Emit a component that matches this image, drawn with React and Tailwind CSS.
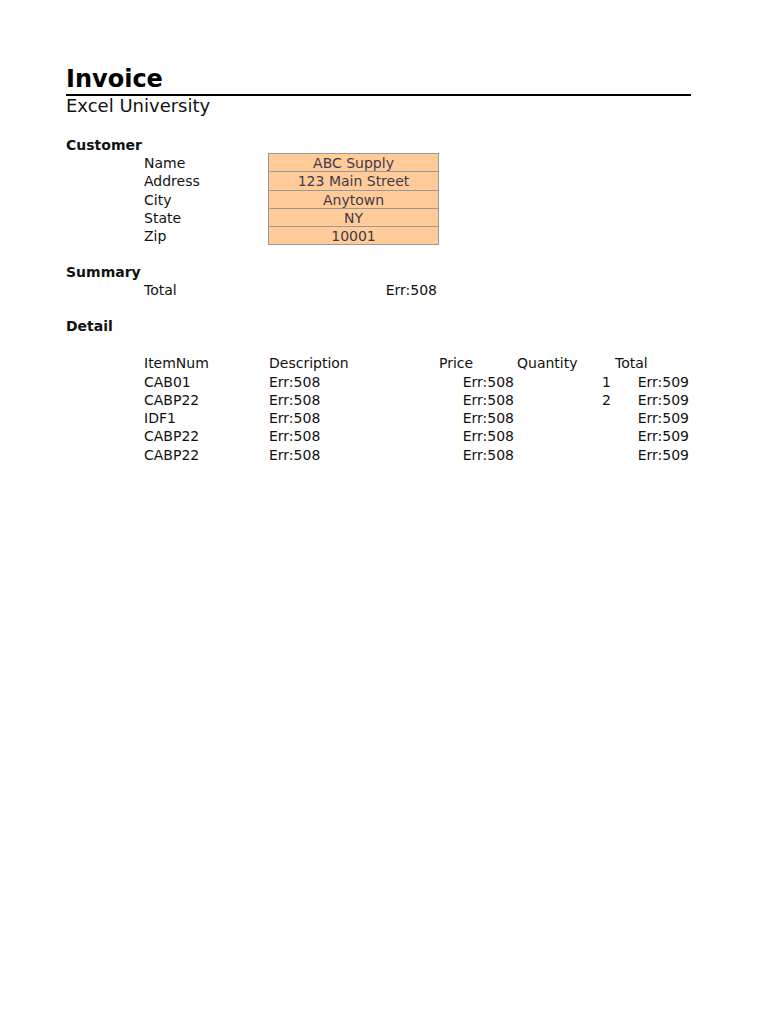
const customer = [
  ["Name", "ABC Supply"],
  ["Address", "123 Main Street"],
  ["City", "Anytown"],
  ["State", "NY"],
  ["Zip", "10001"],
];

const items = [
  ["CAB01", "1"],
  ["CABP22", "2"],
  ["IDF1", ""],
  ["CABP22", ""],
  ["CABP22", ""],
];

const App = () => {
  return (
    <div className="min-h-[1024px] w-[768px] bg-white text-[#111111] font-['DejaVu_Sans',sans-serif]">
      <div className="pl-[66px] pr-[77px] pt-[64px]">
        <h1 className="text-[24px] leading-[30px] font-bold text-black">Invoice</h1>
        <div className="h-[2px] bg-black"></div>
        <div className="text-[18px] leading-[20px]">Excel University</div>

        <div className="mt-[20px] text-[14px] leading-[18px] font-bold">Customer</div>
        <div className="flex">
          <div className="w-[78px]"></div>
          <div className="flex flex-col">
            {customer.map(([label, value]) => (
              <div key={label} className="flex h-[18.3px] text-[14px] leading-[18px]">
                <div className="w-[124px]">{label}</div>
                <div className="w-[171px] text-center bg-[#ffcc99] border border-[#999999] -mt-px text-[#3f3a4a]">
                  {value}
                </div>
              </div>
            ))}
          </div>
        </div>

        <div className="mt-[18px] text-[14px] leading-[18px] font-bold">Summary</div>
        <div className="flex text-[14px] leading-[18px]">
          <div className="w-[78px]"></div>
          <div className="w-[124px]">Total</div>
          <div className="w-[169px] text-right">Err:508</div>
        </div>

        <div className="mt-[18px] text-[14px] leading-[18px] font-bold">Detail</div>
        <div className="mt-[19px] text-[14px] leading-[18.2px]">
          <div className="flex">
            <div className="w-[78px]"></div>
            <div className="w-[125px]">ItemNum</div>
            <div className="w-[170px]">Description</div>
            <div className="w-[78px]">Price</div>
            <div className="w-[98px]">Quantity</div>
            <div>Total</div>
          </div>
          {items.map(([num, qty], i) => (
            <div key={i} className="flex">
              <div className="w-[78px]"></div>
              <div className="w-[125px]">{num}</div>
              <div className="w-[170px]">Err:508</div>
              <div className="w-[75px] text-right">Err:508</div>
              <div className="w-[97px] text-right">{qty}</div>
              <div className="w-[78px] text-right">Err:509</div>
            </div>
          ))}
        </div>
      </div>
    </div>
  );
};

export default App;
